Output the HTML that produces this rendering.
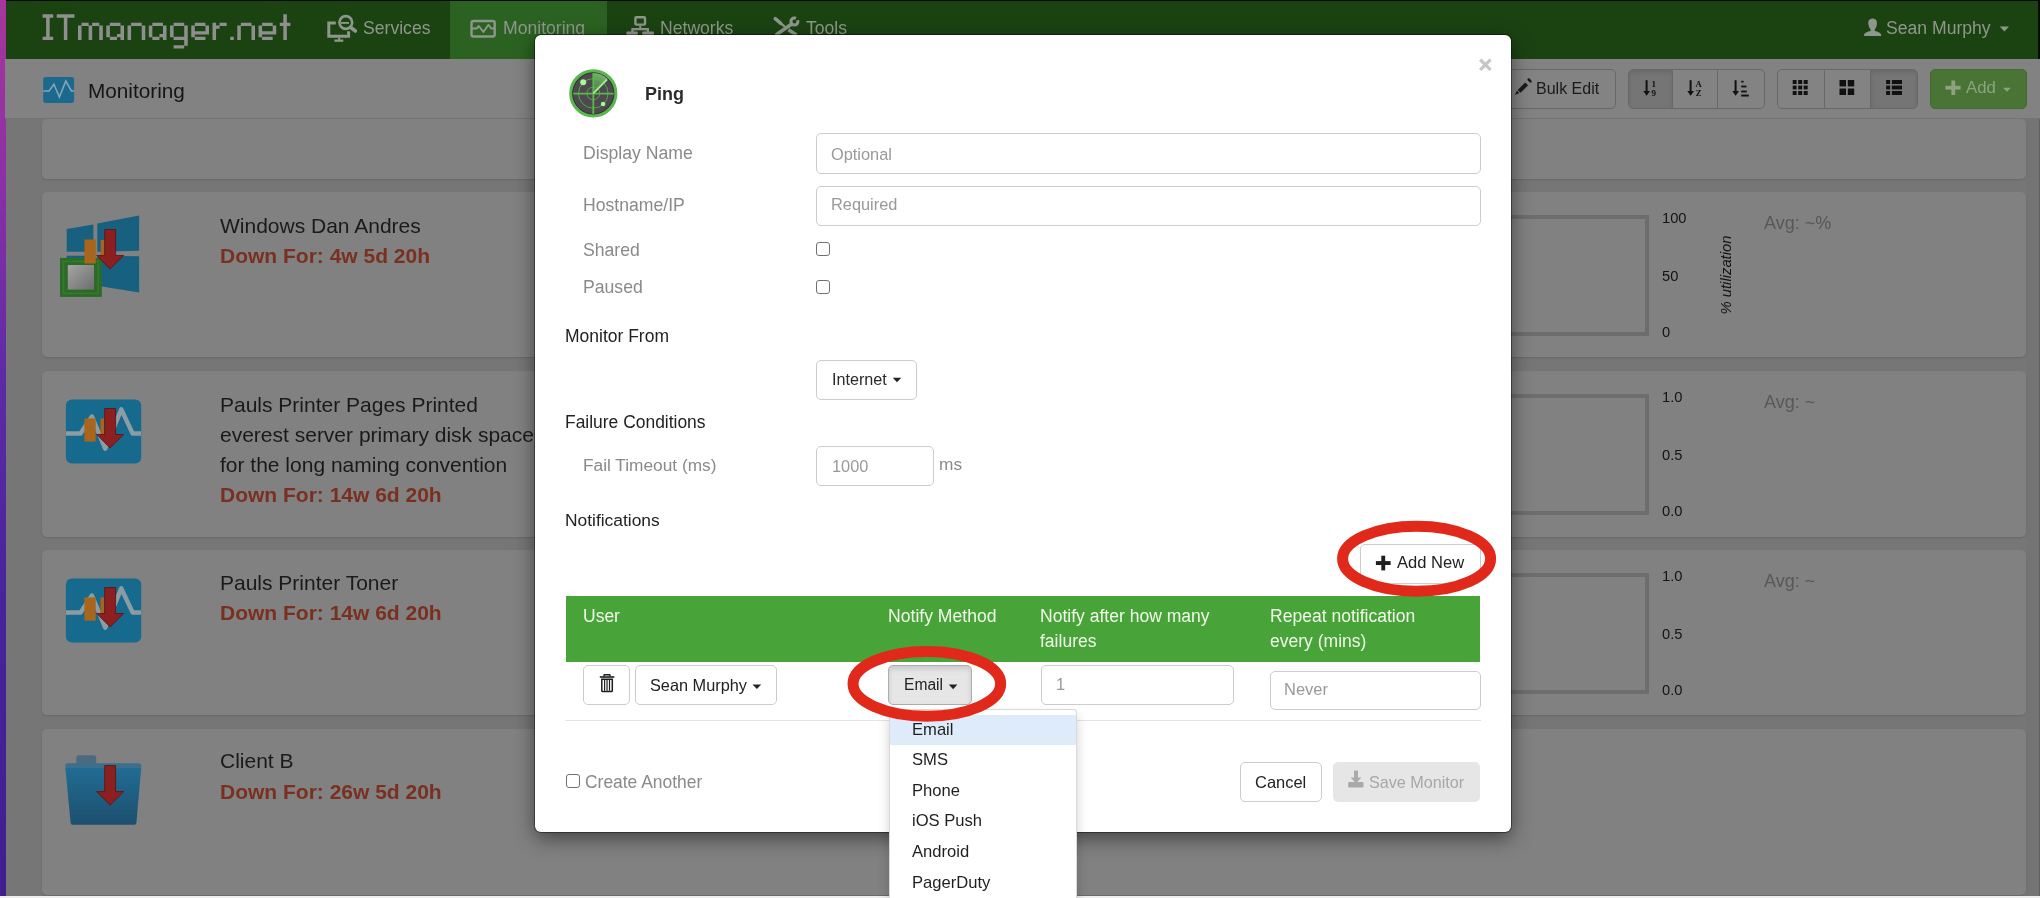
<!DOCTYPE html>
<html><head><meta charset="utf-8">
<style>
*{box-sizing:border-box;margin:0;padding:0}
html,body{width:2040px;height:898px;overflow:hidden;background:#767676;font-family:"Liberation Sans",sans-serif;position:relative}
.a{position:absolute}
.t{line-height:1;white-space:nowrap;will-change:transform}
.card{left:42px;width:1984px;background:#818181;border-radius:5px;box-shadow:0 1px 2px rgba(0,0,0,.12)}
.gb{border:1px solid #686868;background:#838383}
.inp{border:1px solid #cccccc;border-radius:5px;background:#fff}
.mb{border:1px solid #cccccc;border-radius:5px;background:#fff}
.cb{width:14px;height:14px;border:1.5px solid #707070;border-radius:3px;background:#fff}
svg{overflow:visible}
</style></head><body>

<div class="a" style="left:5px;top:1px;width:2035px;height:58px;background:#1b4312"></div>
<div class="a" style="left:450px;top:1px;width:157px;height:58px;background:#2b6221"></div>
<div class="a" style="left:0;top:0;width:2040px;height:1px;background:#060606"></div>
<div class="a" style="left:2038px;top:0;width:2px;height:59px;background:#0a0a0a"></div>
<div class="a" style="left:0;top:0;width:6px;height:898px;background:linear-gradient(#a8369c 0%,#8c2fa6 20%,#5e2aa6 42%,#46249c 68%,#3e1f8e 100%)"></div>
<svg class="a" style="left:0;top:0" width="320" height="60"><path fill="#8f8f8f" d="M42.60 14.35h10.62v3.30h-10.62ZM46.14 17.15h3.54v3.30h-3.54ZM46.14 19.95h3.54v3.30h-3.54ZM46.14 22.75h3.54v3.30h-3.54ZM46.14 25.55h3.54v3.30h-3.54ZM46.14 28.35h3.54v3.30h-3.54ZM46.14 31.15h3.54v3.30h-3.54ZM46.14 33.95h3.54v3.30h-3.54ZM42.60 36.75h10.62v3.30h-10.62ZM56.76 14.35h17.70v3.30h-17.70ZM63.84 17.15h3.54v3.30h-3.54ZM63.84 19.95h3.54v3.30h-3.54ZM63.84 22.75h3.54v3.30h-3.54ZM63.84 25.55h3.54v3.30h-3.54ZM63.84 28.35h3.54v3.30h-3.54ZM63.84 31.15h3.54v3.30h-3.54ZM63.84 33.95h3.54v3.30h-3.54ZM63.84 36.75h3.54v3.30h-3.54ZM81.54 22.75h7.08v3.30h-7.08ZM92.16 22.75h7.08v3.30h-7.08ZM78.00 25.55h3.54v3.30h-3.54ZM88.62 25.55h3.54v3.30h-3.54ZM99.24 25.55h3.54v3.30h-3.54ZM78.00 28.35h3.54v3.30h-3.54ZM88.62 28.35h3.54v3.30h-3.54ZM99.24 28.35h3.54v3.30h-3.54ZM78.00 31.15h3.54v3.30h-3.54ZM88.62 31.15h3.54v3.30h-3.54ZM99.24 31.15h3.54v3.30h-3.54ZM78.00 33.95h3.54v3.30h-3.54ZM88.62 33.95h3.54v3.30h-3.54ZM99.24 33.95h3.54v3.30h-3.54ZM78.00 36.75h3.54v3.30h-3.54ZM88.62 36.75h3.54v3.30h-3.54ZM99.24 36.75h3.54v3.30h-3.54ZM109.86 22.75h10.62v3.30h-10.62ZM106.32 25.55h3.54v3.30h-3.54ZM120.48 25.55h3.54v3.30h-3.54ZM106.32 28.35h3.54v3.30h-3.54ZM120.48 28.35h3.54v3.30h-3.54ZM106.32 31.15h3.54v3.30h-3.54ZM120.48 31.15h3.54v3.30h-3.54ZM106.32 33.95h3.54v3.30h-3.54ZM116.94 33.95h7.08v3.30h-7.08ZM109.86 36.75h7.08v3.30h-7.08ZM120.48 36.75h3.54v3.30h-3.54ZM131.10 22.75h10.62v3.30h-10.62ZM127.56 25.55h3.54v3.30h-3.54ZM141.72 25.55h3.54v3.30h-3.54ZM127.56 28.35h3.54v3.30h-3.54ZM141.72 28.35h3.54v3.30h-3.54ZM127.56 31.15h3.54v3.30h-3.54ZM141.72 31.15h3.54v3.30h-3.54ZM127.56 33.95h3.54v3.30h-3.54ZM141.72 33.95h3.54v3.30h-3.54ZM127.56 36.75h3.54v3.30h-3.54ZM141.72 36.75h3.54v3.30h-3.54ZM152.34 22.75h10.62v3.30h-10.62ZM148.80 25.55h3.54v3.30h-3.54ZM162.96 25.55h3.54v3.30h-3.54ZM148.80 28.35h3.54v3.30h-3.54ZM162.96 28.35h3.54v3.30h-3.54ZM148.80 31.15h3.54v3.30h-3.54ZM162.96 31.15h3.54v3.30h-3.54ZM148.80 33.95h3.54v3.30h-3.54ZM159.42 33.95h7.08v3.30h-7.08ZM152.34 36.75h7.08v3.30h-7.08ZM162.96 36.75h3.54v3.30h-3.54ZM173.58 22.75h10.62v3.30h-10.62ZM170.04 25.55h3.54v3.30h-3.54ZM184.20 25.55h3.54v3.30h-3.54ZM170.04 28.35h3.54v3.30h-3.54ZM184.20 28.35h3.54v3.30h-3.54ZM170.04 31.15h3.54v3.30h-3.54ZM184.20 31.15h3.54v3.30h-3.54ZM170.04 33.95h3.54v3.30h-3.54ZM184.20 33.95h3.54v3.30h-3.54ZM173.58 36.75h14.16v3.30h-14.16ZM184.20 39.55h3.54v3.30h-3.54ZM184.20 42.35h3.54v3.30h-3.54ZM173.58 45.15h10.62v3.30h-10.62ZM194.82 22.75h10.62v3.30h-10.62ZM191.28 25.55h3.54v3.30h-3.54ZM205.44 25.55h3.54v3.30h-3.54ZM191.28 28.35h3.54v3.30h-3.54ZM205.44 28.35h3.54v3.30h-3.54ZM191.28 31.15h17.70v3.30h-17.70ZM191.28 33.95h3.54v3.30h-3.54ZM194.82 36.75h10.62v3.30h-10.62ZM212.52 22.75h3.54v3.30h-3.54ZM219.60 22.75h7.08v3.30h-7.08ZM212.52 25.55h7.08v3.30h-7.08ZM212.52 28.35h3.54v3.30h-3.54ZM212.52 31.15h3.54v3.30h-3.54ZM212.52 33.95h3.54v3.30h-3.54ZM212.52 36.75h3.54v3.30h-3.54ZM230.22 36.75h3.54v3.30h-3.54ZM240.84 22.75h10.62v3.30h-10.62ZM237.30 25.55h3.54v3.30h-3.54ZM251.46 25.55h3.54v3.30h-3.54ZM237.30 28.35h3.54v3.30h-3.54ZM251.46 28.35h3.54v3.30h-3.54ZM237.30 31.15h3.54v3.30h-3.54ZM251.46 31.15h3.54v3.30h-3.54ZM237.30 33.95h3.54v3.30h-3.54ZM251.46 33.95h3.54v3.30h-3.54ZM237.30 36.75h3.54v3.30h-3.54ZM251.46 36.75h3.54v3.30h-3.54ZM262.08 22.75h10.62v3.30h-10.62ZM258.54 25.55h3.54v3.30h-3.54ZM272.70 25.55h3.54v3.30h-3.54ZM258.54 28.35h3.54v3.30h-3.54ZM272.70 28.35h3.54v3.30h-3.54ZM258.54 31.15h17.70v3.30h-17.70ZM258.54 33.95h3.54v3.30h-3.54ZM262.08 36.75h10.62v3.30h-10.62ZM283.32 14.35h3.54v3.30h-3.54ZM283.32 17.15h3.54v3.30h-3.54ZM283.32 19.95h3.54v3.30h-3.54ZM279.78 22.75h10.62v3.30h-10.62ZM283.32 25.55h3.54v3.30h-3.54ZM283.32 28.35h3.54v3.30h-3.54ZM283.32 31.15h3.54v3.30h-3.54ZM283.32 33.95h3.54v3.30h-3.54ZM283.32 36.75h3.54v3.30h-3.54Z"/></svg>
<svg class="a" style="left:0;top:0" width="10" height="10">
<g fill="none" stroke="#8d978b">
<path d="M335.8 23.05 H328.8 V36.3 H348.6 V31.2" stroke-width="3"/>
<path d="M341 22.9 H349" stroke-width="1.9"/>
<circle cx="345.8" cy="22.5" r="6.4" stroke-width="2.6"/>
</g>
<g fill="#8d978b"><rect x="338.2" y="37.5" width="2" height="2.4"/><rect x="334.4" y="39.5" width="8.9" height="2.3"/></g>
<path d="M350.4 27.3 L355.4 31" stroke="#8d978b" stroke-width="3.6" stroke-linecap="round"/>
</svg>
<div class="a t" style="left:362.6px;top:19.90px;font-size:17.6px;color:#8d978b;">Services</div>
<svg class="a" style="left:0;top:0" width="10" height="10">
<rect x="471.5" y="21" width="23.2" height="15.5" rx="2" fill="none" stroke="#8d978b" stroke-width="2.4"/>
<path d="M472 28.5 H476.6 L478.8 26 L483.4 32 L488.5 24.8 L491.2 28.5 H494.5" fill="none" stroke="#8d978b" stroke-width="1.9" stroke-linejoin="round"/>
</svg>
<div class="a t" style="left:503.4px;top:19.90px;font-size:17.6px;color:#8d978b;">Monitoring</div>
<svg class="a" style="left:0;top:0" width="10" height="10">
<rect x="635.4" y="17.3" width="9.6" height="7.3" rx="1" fill="none" stroke="#8d978b" stroke-width="2.4"/>
<g fill="#8d978b"><rect x="639.2" y="25.6" width="2.1" height="2.6"/><rect x="631.3" y="28" width="17.7" height="2.3"/>
<rect x="631.3" y="30" width="2.3" height="2"/><rect x="646.7" y="30" width="2.3" height="2"/>
<rect x="626.4" y="31.4" width="11.3" height="5" rx="1"/><rect x="642.3" y="31.4" width="11.6" height="5" rx="1"/></g>
</svg>
<div class="a t" style="left:660.2px;top:19.90px;font-size:17.6px;color:#8d978b;">Networks</div>
<svg class="a" style="left:0;top:0" width="10" height="10">
<path d="M775.2 18.6 L780.8 23.4" stroke="#8d978b" stroke-width="3.4" stroke-linecap="round"/>
<path d="M780 22.6 L785 26.8" stroke="#8d978b" stroke-width="2.2"/>
<path d="M788.4 29.8 L796.6 35" stroke="#8d978b" stroke-width="3.4"/>
<path d="M776.6 34.4 L791.4 24.2" stroke="#8d978b" stroke-width="3.6" stroke-linecap="round"/>
<circle cx="794.4" cy="21.6" r="3.5" fill="none" stroke="#8d978b" stroke-width="3"/>
<path d="M794.6 21.4 L797.2 15.4 L801.6 18.6 Z" fill="#1b4312"/>
</svg>
<div class="a t" style="left:806px;top:19.90px;font-size:17.6px;color:#8d978b;">Tools</div>
<svg class="a" style="left:0;top:0" width="10" height="10">
<path d="M1872.6 18.4 C1868.8 18.4 1868 21.6 1868.4 24.2 C1868.8 27 1870 28.8 1870.6 29.4 V31 C1866.5 31.8 1864 33 1864 35.9 H1881.3 C1881.3 33 1878.8 31.8 1874.7 31 V29.4 C1875.3 28.8 1876.5 27 1876.9 24.2 C1877.3 21.6 1876.5 18.4 1872.6 18.4 Z" fill="#8d978b"/>
<path d="M1999.8 26.6 H2009 L2004.4 31.6 Z" fill="#8d978b"/>
</svg>
<div class="a t" style="left:1886.4px;top:20.30px;font-size:17.6px;color:#8d978b;">Sean Murphy</div>
<div class="a" style="left:5px;top:59px;width:2035px;height:59px;background:#828282"></div>
<div class="a" style="left:5px;top:118px;width:2035px;height:1px;background:#747474"></div>
<svg class="a" style="left:0;top:0" width="10" height="10">
<rect x="43.2" y="77.1" width="30.9" height="25.9" rx="2.5" fill="#1b6a8e"/>
<path d="M43.2 91 H49.1 L53.9 84.3 L59.4 97 L65.8 81.1 L71.4 91 H74.1" fill="none" stroke="#86a6b4" stroke-width="1.6"/>
</svg>
<div class="a t" style="left:88.2px;top:81.14px;font-size:20.75px;color:#151515;">Monitoring</div>
<div class="a gb" style="left:1470px;top:69px;width:146px;height:40px;border-radius:5px"></div>
<svg class="a" style="left:0;top:0" width="10" height="10">
<path d="M1515 94.9 L1516.9 90.6 L1519.3 93 Z" fill="#1a1a1a"/>
<path d="M1517.7 89.9 L1525.2 82.4 L1528.1 85.3 L1520.6 92.8 Z" fill="#1a1a1a"/>
<path d="M1528.7 79.5 L1530.5 81.3" stroke="#1a1a1a" stroke-width="2.5" stroke-linecap="round"/>
</svg>
<div class="a t" style="left:1535.6px;top:81.46px;font-size:16.0px;color:#1a1a1a;">Bulk Edit</div>
<div class="a gb" style="left:1628px;top:69px;width:137px;height:40px;border-radius:5px"></div>
<div class="a" style="left:1629px;top:70px;width:44px;height:38px;background:#757575;border-radius:4px 0 0 4px;box-shadow:inset 0 2px 4px rgba(0,0,0,.12)"></div>
<div class="a" style="left:1672px;top:69px;width:1px;height:40px;background:#686868"></div>
<div class="a" style="left:1717px;top:69px;width:1px;height:40px;background:#686868"></div>
<div class="a gb" style="left:1777px;top:69px;width:141px;height:40px;border-radius:5px"></div>
<div class="a" style="left:1871px;top:70px;width:46px;height:38px;background:#757575;border-radius:0 4px 4px 0;box-shadow:inset 0 2px 4px rgba(0,0,0,.12)"></div>
<div class="a" style="left:1824px;top:69px;width:1px;height:40px;background:#686868"></div>
<div class="a" style="left:1870px;top:69px;width:1px;height:40px;background:#686868"></div>
<svg class="a" style="left:0;top:0" width="10" height="10">
<g fill="#111">
<rect x="1645.6" y="80.2" width="2" height="12"/><path d="M1643.3 91 H1650 L1646.6 95.8 Z"/>
<rect x="1689.6" y="80.2" width="2" height="12"/><path d="M1687.3 91 H1694 L1690.6 95.8 Z"/>
<rect x="1734.6" y="80.2" width="2" height="12"/><path d="M1732.3 91 H1739 L1735.6 95.8 Z"/>
<rect x="1741.2" y="80.8" width="2.4" height="1.7"/><rect x="1741.2" y="85.6" width="5.3" height="1.8"/><rect x="1741.2" y="90.6" width="5.6" height="1.8"/><rect x="1741.2" y="94.6" width="7.6" height="1.9"/>
</g>
<text x="1651.6" y="86.8" font-family="Liberation Serif" font-weight="bold" font-size="9" fill="#111">1</text>
<text x="1651.6" y="96.1" font-family="Liberation Serif" font-weight="bold" font-size="9" fill="#111">9</text>
<text x="1695.4" y="86.8" font-family="Liberation Serif" font-weight="bold" font-size="8.6" fill="#111">A</text>
<text x="1695.8" y="96.1" font-family="Liberation Serif" font-weight="bold" font-size="8.6" fill="#111">Z</text>
<g fill="#111">
<rect x="1792.7" y="80" width="3.9" height="4"/><rect x="1798.2" y="80" width="4" height="4"/><rect x="1803.7" y="80" width="4" height="4"/>
<rect x="1792.7" y="85.6" width="3.9" height="3.8"/><rect x="1798.2" y="85.6" width="4" height="3.8"/><rect x="1803.7" y="85.6" width="4" height="3.8"/>
<rect x="1792.7" y="91" width="3.9" height="4"/><rect x="1798.2" y="91" width="4" height="4"/><rect x="1803.7" y="91" width="4" height="4"/>
<rect x="1839.5" y="80" width="6.5" height="6.4"/><rect x="1847.8" y="80" width="6.4" height="6.4"/>
<rect x="1839.5" y="88.5" width="6.5" height="6.5"/><rect x="1847.8" y="88.5" width="6.4" height="6.5"/>
<rect x="1886.1" y="80" width="4" height="4"/><rect x="1891.9" y="80" width="10.1" height="4"/>
<rect x="1886.1" y="85.6" width="4" height="3.8"/><rect x="1891.9" y="85.6" width="10.1" height="3.8"/>
<rect x="1886.1" y="91" width="4" height="4"/><rect x="1891.9" y="91" width="10.1" height="4"/>
</g>
</svg>
<div class="a" style="left:1930px;top:69px;width:97px;height:40px;background:#4a7436;border-radius:5px;border:1px solid #436b30"></div>
<svg class="a" style="left:0;top:0" width="10" height="10">
<g fill="#8aa57e"><rect x="1951.4" y="80.5" width="3.8" height="14.5"/><rect x="1945.4" y="85.8" width="15.2" height="3.8"/>
<path d="M2003 87.8 H2010.9 L2007 91.8 Z"/></g>
</svg>
<div class="a t" style="left:1966.2px;top:80.22px;font-size:16.75px;color:#8aa57e;">Add</div>
<div class="a" style="left:2026px;top:119px;width:14px;height:778px;background:#747474"></div>
<div class="a" style="left:2038.5px;top:119px;width:1.5px;height:779px;background:#636363"></div>
<div class="a card" style="top:119px;height:60px"></div>
<div class="a card" style="top:192px;height:165px"></div>
<div class="a card" style="top:371px;height:166px"></div>
<div class="a card" style="top:550px;height:165px"></div>
<div class="a card" style="top:729px;height:166px"></div>
<div class="a t" style="left:220px;top:215.12px;font-size:21px;color:#1a1a1a;">Windows Dan Andres</div>
<div class="a t" style="left:220px;top:245.22px;font-size:21px;color:#7a3020;font-weight:bold;">Down For: 4w 5d 20h</div>
<div class="a t" style="left:220px;top:394.02px;font-size:21px;color:#1a1a1a;">Pauls Printer Pages Printed</div>
<div class="a t" style="left:220px;top:424.02px;font-size:21px;color:#1a1a1a;">everest server primary disk space</div>
<div class="a t" style="left:220px;top:454.12px;font-size:21px;color:#1a1a1a;">for the long naming convention</div>
<div class="a t" style="left:220px;top:484.22px;font-size:21px;color:#7a3020;font-weight:bold;">Down For: 14w 6d 20h</div>
<div class="a t" style="left:220px;top:572.02px;font-size:21px;color:#1a1a1a;">Pauls Printer Toner</div>
<div class="a t" style="left:220px;top:601.92px;font-size:21px;color:#7a3020;font-weight:bold;">Down For: 14w 6d 20h</div>
<div class="a t" style="left:220px;top:750.22px;font-size:21px;color:#1a1a1a;">Client B</div>
<div class="a t" style="left:220px;top:780.62px;font-size:21px;color:#7a3020;font-weight:bold;">Down For: 26w 5d 20h</div>
<svg class="a" style="left:0;top:0" width="10" height="10">
<g fill="#17607f">
<path d="M66.7 229 L93.4 224.5 V251.8 H66.7 Z"/>
<path d="M97.3 223.4 L139.1 215.6 V250.7 L97.3 251.8 Z"/>
<path d="M66.7 255.7 H93.4 V283 L66.7 279 Z"/>
<path d="M97.3 255.7 L139.1 256.2 V292.4 L97.3 285.7 Z"/>
</g>
<rect x="60" y="257.9" width="41.8" height="39" fill="#2c6a26"/>
<rect x="63.5" y="261.4" width="34.8" height="32" fill="none" stroke="#347c2d" stroke-width="1.5"/>
<defs><linearGradient id="chip" x1="0" y1="0" x2="1" y2="1"><stop offset="0" stop-color="#a5a5a5"/><stop offset="1" stop-color="#6d6d6d"/></linearGradient></defs>
<rect x="67.8" y="265" width="26.2" height="24.6" fill="url(#chip)"/>
<rect x="84.5" y="239.5" width="11.2" height="24" fill="#a9651b"/>
<rect x="100.7" y="240" width="4" height="15" fill="#a9651b"/>
<g transform="translate(0,229.5)"><path d="M104.7 0 H115.6 V26 H123.7 L110.1 39.5 L96.7 26 H104.7 Z" fill="#8c2020" stroke="#5a1010" stroke-width="0.8"/></g>
</svg>
<svg class="a" style="left:0;top:0" width="10" height="10"><g transform="translate(0,0)">
<rect x="65.9" y="399.5" width="75.3" height="63.9" rx="6" fill="#156a8d"/>
<path d="M66 433.6 H80.6 L91.9 416.5 L105.2 448.7 L121.3 409.4 L132.7 433.6 H141" fill="none" stroke="#8b9ca4" stroke-width="4.5" stroke-linejoin="round"/>
<rect x="84.4" y="418.4" width="11.3" height="23.2" fill="#a9651b"/>
<rect x="100.5" y="418.4" width="4" height="16" fill="#a9651b"/>
</g><g transform="translate(0,408.5)"><path d="M104.7 0 H115.6 V26 H123.7 L110.1 39.5 L96.7 26 H104.7 Z" fill="#8c2020" stroke="#5a1010" stroke-width="0.8"/></g></svg>
<svg class="a" style="left:0;top:0" width="10" height="10"><g transform="translate(0,179)">
<rect x="65.9" y="399.5" width="75.3" height="63.9" rx="6" fill="#156a8d"/>
<path d="M66 433.6 H80.6 L91.9 416.5 L105.2 448.7 L121.3 409.4 L132.7 433.6 H141" fill="none" stroke="#8b9ca4" stroke-width="4.5" stroke-linejoin="round"/>
<rect x="84.4" y="418.4" width="11.3" height="23.2" fill="#a9651b"/>
<rect x="100.5" y="418.4" width="4" height="16" fill="#a9651b"/>
</g><g transform="translate(0,587.5)"><path d="M104.7 0 H115.6 V26 H123.7 L110.1 39.5 L96.7 26 H104.7 Z" fill="#8c2020" stroke="#5a1010" stroke-width="0.8"/></g></svg>
<svg class="a" style="left:0;top:0" width="10" height="10">
<defs><linearGradient id="fold" x1="0" y1="0" x2="0" y2="1"><stop offset="0" stop-color="#216c93"/><stop offset="1" stop-color="#1d4f6e"/></linearGradient></defs>
<rect x="76.3" y="755.2" width="19.9" height="10" rx="2.5" fill="#4c6a7e"/>
<rect x="65.4" y="763.3" width="75.8" height="7" rx="2" fill="#3c6f8e"/>
<path d="M65.4 768 H141.2 L136.4 822.8 Q136.2 824.8 134.4 824.8 H72.6 Q70.8 824.8 70.6 822.8 Z" fill="url(#fold)"/>
<g transform="translate(0,765.6)"><path d="M104.7 0 H115.6 V26 H123.7 L110.1 39.5 L96.7 26 H104.7 Z" fill="#8c2020" stroke="#5a1010" stroke-width="0.8"/></g>
</svg>
<div class="a t" style="left:1661.5px;top:211.26px;font-size:14.7px;color:#141414;">100</div>
<div class="a t" style="left:1661.5px;top:268.76px;font-size:14.7px;color:#141414;">50</div>
<div class="a t" style="left:1661.5px;top:325.36px;font-size:14.7px;color:#141414;">0</div>
<div class="a" style="left:1400px;top:215px;width:249px;height:121px;border:4.3px solid #6d6d6d;border-left:none"></div>
<div class="a t" style="left:1681px;top:268px;font-size:14.8px;font-style:italic;color:#141414;transform:rotate(-90deg);transform-origin:center;width:90px;text-align:center;line-height:14px">% utilization</div>
<div class="a t" style="left:1764px;top:214.36px;font-size:18.0px;color:#585858;">Avg: ~%</div>
<div class="a t" style="left:1661.5px;top:390.26px;font-size:14.7px;color:#141414;">1.0</div>
<div class="a t" style="left:1661.5px;top:447.76px;font-size:14.7px;color:#141414;">0.5</div>
<div class="a t" style="left:1661.5px;top:504.36px;font-size:14.7px;color:#141414;">0.0</div>
<div class="a" style="left:1400px;top:394px;width:249px;height:121px;border:4.3px solid #6d6d6d;border-left:none"></div>
<div class="a t" style="left:1764px;top:393.36px;font-size:18.0px;color:#585858;">Avg: ~</div>
<div class="a t" style="left:1661.5px;top:569.26px;font-size:14.7px;color:#141414;">1.0</div>
<div class="a t" style="left:1661.5px;top:626.76px;font-size:14.7px;color:#141414;">0.5</div>
<div class="a t" style="left:1661.5px;top:683.36px;font-size:14.7px;color:#141414;">0.0</div>
<div class="a" style="left:1400px;top:573px;width:249px;height:121px;border:4.3px solid #6d6d6d;border-left:none"></div>
<div class="a t" style="left:1764px;top:572.36px;font-size:18.0px;color:#585858;">Avg: ~</div>
<div class="a" style="left:0;top:896.4px;width:2040px;height:1.6px;background:#eeeeee"></div>
<div class="a" style="left:535px;top:35px;width:976px;height:797px;background:#fff;border-radius:6px;box-shadow:0 6px 20px rgba(0,0,0,.5),0 0 0 1px rgba(0,0,0,.4)"></div>
<svg class="a" style="left:0;top:0" width="10" height="10">
<circle cx="593.3" cy="93.4" r="22.4" fill="#4d4a4d" stroke="#5ab64e" stroke-width="3.4"/>
<circle cx="593.3" cy="93.4" r="20.6" fill="none" stroke="#2f2f2f" stroke-width="1"/>
<defs><radialGradient id="sw" cx="593.3" cy="93.4" r="20.6" gradientUnits="userSpaceOnUse"><stop offset="0" stop-color="#5a7a55"/><stop offset=".6" stop-color="#5f9358"/><stop offset="1" stop-color="#78b36c"/></radialGradient></defs><path d="M593.3 93.4 L593.3 73 A20.4 20.4 0 0 1 607.7 79 Z" fill="url(#sw)"/>
<circle cx="593.3" cy="93.4" r="14.8" fill="none" stroke="#5ab64e" stroke-width="1" opacity=".8"/>
<circle cx="593.3" cy="93.4" r="6.4" fill="none" stroke="#5ab64e" stroke-width="1" opacity=".8"/>
<path d="M573.2 93.7 H613.7 M593.3 73 V114" stroke="#5ab64e" stroke-width="1.8"/>
<path d="M593.3 93.4 L607 79.5" stroke="#9ef08e" stroke-width="1.8"/>
<circle cx="583.2" cy="82.3" r="3" fill="#a9f59b"/>
<circle cx="603.1" cy="104" r="2.3" fill="#a9f59b"/>
</svg>
<div class="a t" style="left:645px;top:85.70px;font-size:17.96px;color:#2b2b2b;font-weight:bold;">Ping</div>
<svg class="a" style="left:0;top:0" width="10" height="10">
<path d="M1480.2 59.6 L1490.6 69.8 M1490.6 59.6 L1480.2 69.8" stroke="#c6c6c6" stroke-width="3.2"/>
</svg>
<div class="a t" style="left:582.5px;top:145.27px;font-size:17.64px;color:#8a8a8a;">Display Name</div>
<div class="a inp" style="left:816px;top:133px;width:665px;height:41px"></div>
<div class="a t" style="left:831px;top:145.56px;font-size:16.35px;color:#999999;">Optional</div>
<div class="a t" style="left:582.5px;top:197.07px;font-size:17.64px;color:#8a8a8a;">Hostname/IP</div>
<div class="a inp" style="left:816px;top:185.5px;width:665px;height:40px"></div>
<div class="a t" style="left:831px;top:196.46px;font-size:16.35px;color:#999999;">Required</div>
<div class="a t" style="left:582.5px;top:241.57px;font-size:17.64px;color:#8a8a8a;">Shared</div>
<div class="a cb" style="left:816px;top:242px"></div>
<div class="a t" style="left:582.5px;top:279.07px;font-size:17.64px;color:#8a8a8a;">Paused</div>
<div class="a cb" style="left:816px;top:280px"></div>
<div class="a t" style="left:564.8px;top:327.89px;font-size:17.49px;color:#222222;">Monitor From</div>
<div class="a mb" style="left:816px;top:360px;width:101px;height:40px"></div>
<div class="a t" style="left:831.5px;top:371.12px;font-size:16.16px;color:#2a2a2a;">Internet</div>
<svg class="a" style="left:0;top:0" width="10" height="10"><path d="M892.7 377.8 H901.2 L897 382.2 Z" fill="#222"/></svg>
<div class="a t" style="left:564.8px;top:413.62px;font-size:17.46px;color:#222222;">Failure Conditions</div>
<div class="a t" style="left:582.5px;top:457.36px;font-size:17.3px;color:#8a8a8a;">Fail Timeout (ms)</div>
<div class="a inp" style="left:816px;top:446px;width:118px;height:40px"></div>
<div class="a t" style="left:832px;top:458.16px;font-size:16.35px;color:#999999;">1000</div>
<div class="a t" style="left:938.6px;top:455.86px;font-size:17.3px;color:#8a8a8a;">ms</div>
<div class="a t" style="left:564.8px;top:511.67px;font-size:17.4px;color:#222222;">Notifications</div>
<div class="a mb" style="left:1360px;top:544px;width:121px;height:40px"></div>
<svg class="a" style="left:0;top:0" width="10" height="10"><g fill="#1f1f1f"><rect x="1381.3" y="555.7" width="3.9" height="14.7"/><rect x="1375.9" y="561.1" width="14.7" height="3.9"/></g></svg>
<div class="a t" style="left:1397px;top:555.08px;font-size:16.56px;color:#222;">Add New</div>
<div class="a" style="left:565.8px;top:596.1px;width:914.2px;height:66.3px;background:#48a338"></div>
<div class="a t" style="left:582.7px;top:607.79px;font-size:17.5px;color:#f1fbeb;">User</div>
<div class="a t" style="left:887.5px;top:608.10px;font-size:17.6px;color:#f1fbeb;">Notify Method</div>
<div class="a t" style="left:1040.3px;top:607.64px;font-size:17.55px;color:#f1fbeb;">Notify after how many</div>
<div class="a t" style="left:1040.3px;top:633.14px;font-size:17.55px;color:#f1fbeb;">failures</div>
<div class="a t" style="left:1269.5px;top:607.64px;font-size:17.55px;color:#f1fbeb;">Repeat notification</div>
<div class="a t" style="left:1269.5px;top:633.14px;font-size:17.55px;color:#f1fbeb;">every (mins)</div>
<div class="a mb" style="left:583px;top:665px;width:47px;height:40px"></div>
<svg class="a" style="left:0;top:0" width="10" height="10"><g fill="none" stroke="#1f1f1f">
<g transform="translate(0,0.7)">
<path d="M599.8 676.3 H614.3" stroke-width="1.6"/>
<path d="M604 676 V674.4 Q604 674 604.6 674 H609.4 Q610 674 610 674.4 V676" stroke-width="1.4"/>
<path d="M601.8 678.6 H612.3 V690.4 Q612.3 690.8 611.8 690.8 H602.3 Q601.8 690.8 601.8 690.4 Z" stroke-width="1.5"/>
<path d="M604.6 679 V690 M607.05 679 V690 M609.5 679 V690" stroke-width="1.2"/>
</g>
</g></svg>
<div class="a mb" style="left:634.6px;top:665px;width:142px;height:40px"></div>
<div class="a t" style="left:649.7px;top:676.79px;font-size:16.31px;color:#222;">Sean Murphy</div>
<svg class="a" style="left:0;top:0" width="10" height="10"><path d="M752.5 684.5 H761.2 L756.9 689 Z" fill="#222"/></svg>
<div class="a" style="left:888.3px;top:665.1px;width:83.3px;height:40.2px;background:#e6e6e6;border:1px solid #adadad;border-radius:5px;box-shadow:inset 0 3px 5px rgba(0,0,0,.125)"></div>
<div class="a t" style="left:903.8px;top:677.39px;font-size:15.6px;color:#222;">Email</div>
<svg class="a" style="left:0;top:0" width="10" height="10"><path d="M948.8 684.5 H957.4 L953.1 689.2 Z" fill="#222"/></svg>
<div class="a inp" style="left:1040.8px;top:665.3px;width:193px;height:40.2px"></div>
<div class="a t" style="left:1056px;top:675.86px;font-size:16.35px;color:#999999;">1</div>
<div class="a inp" style="left:1269.5px;top:670.5px;width:211px;height:39px"></div>
<div class="a t" style="left:1284px;top:680.74px;font-size:16.49px;color:#999999;">Never</div>
<div class="a" style="left:565px;top:720px;width:915.5px;height:1px;background:#e3e3e3"></div>
<div class="a cb" style="left:565.5px;top:774px;width:14px;height:14px"></div>
<div class="a t" style="left:584.5px;top:773.85px;font-size:17.43px;color:#8a8a8a;">Create Another</div>
<div class="a mb" style="left:1240px;top:762.4px;width:82.4px;height:39.2px"></div>
<div class="a t" style="left:1254.5px;top:773.55px;font-size:16.48px;color:#222;">Cancel</div>
<div class="a" style="left:1333.4px;top:762.4px;width:147.1px;height:39.2px;background:#e6e6e6;border-radius:5px"></div>
<svg class="a" style="left:0;top:0" width="10" height="10"><g fill="#a9a9a9">
<rect x="1354" y="770.6" width="4" height="8"/><path d="M1350.6 777.5 H1361.4 L1356 783.2 Z"/>
<rect x="1348.2" y="782" width="15.3" height="5.5" rx="1"/>
</g></svg>
<div class="a t" style="left:1369.2px;top:773.82px;font-size:16.16px;color:#a7a7a7;">Save Monitor</div>
<div class="a" style="left:888.6px;top:708.6px;width:188px;height:200px;background:#fff;border:1px solid rgba(0,0,0,.15);border-radius:4px;box-shadow:0 6px 12px rgba(0,0,0,.175)"></div>
<div class="a" style="left:889.6px;top:714.9px;width:186px;height:29.8px;background:#deebfa"></div>
<div class="a t" style="left:912.4px;top:722.15px;font-size:16.6px;color:#1f1f1f;">Email</div>
<div class="a t" style="left:912.4px;top:752.45px;font-size:16.6px;color:#1f1f1f;">SMS</div>
<div class="a t" style="left:912.4px;top:783.45px;font-size:16.6px;color:#1f1f1f;">Phone</div>
<div class="a t" style="left:912.4px;top:813.45px;font-size:16.6px;color:#1f1f1f;">iOS Push</div>
<div class="a t" style="left:912.4px;top:844.15px;font-size:16.6px;color:#1f1f1f;">Android</div>
<div class="a t" style="left:912.4px;top:875.15px;font-size:16.6px;color:#1f1f1f;">PagerDuty</div>
<svg class="a" style="left:0;top:0" width="2040" height="898">
<ellipse cx="1416.6" cy="558.8" rx="74" ry="32.5" fill="none" stroke="#e0291b" stroke-width="11"/>
<ellipse cx="926.85" cy="683.8" rx="73.8" ry="32.4" fill="none" stroke="#e0291b" stroke-width="11"/>
</svg>
</body></html>
